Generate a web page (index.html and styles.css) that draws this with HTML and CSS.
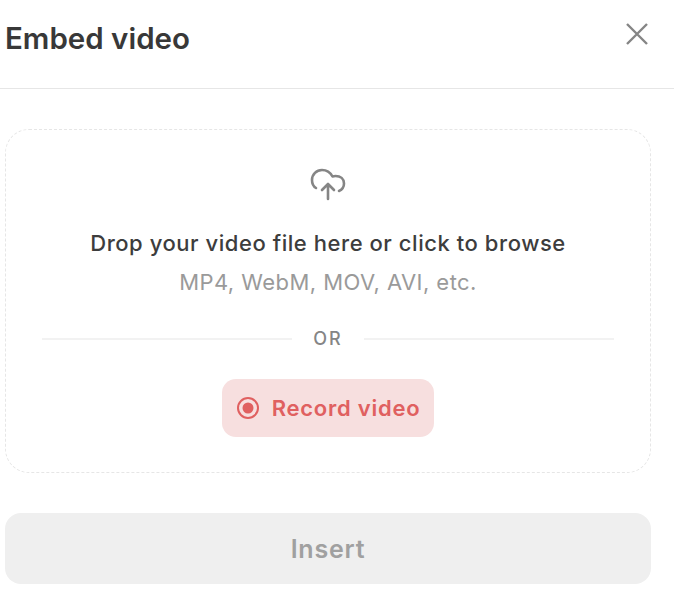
FILE: index.html
```html
<!DOCTYPE html>
<html>
  <head>
    <title>Embed video</title>
    <meta charset="utf-8">
    <link rel="stylesheet" href="styles.css">
  </head>
  <body>
    <div class="dialog">
      <div class="header">
        <h1 class="title">Embed video</h1>
        <svg class="close" width="24" height="24" viewBox="0 0 24 24" fill="none" stroke="#858585" stroke-width="2.4">
          <path d="M2 2L22 22M22 2L2 22"/>
        </svg>
      </div>
      <div class="content">
        <div class="dropzone">
          <svg class="upload" width="36" height="36" viewBox="0 0 36 36" fill="none" stroke="#858585" stroke-width="2.6" stroke-linecap="round" stroke-linejoin="round">
            <path d="M6 22C3.5 20.5 2 17.5 2 14C2 8.5 6.5 4 12 4C16.8 4 20.5 6.8 22.5 10.5C23.5 10.2 24.5 10 25.5 10C30.5 10 34 13 34 17.5C34 20.8 32 23.6 29 25"/>
            <path d="M18 33V18M12 24L18 18L24 24"/>
          </svg>
          <div class="drop-title">Drop your video file here or click to browse</div>
          <div class="drop-hint">MP4, WebM, MOV, AVI, etc.</div>
          <div class="divider">
            <span class="divider-line"></span>
            <span class="divider-text">OR</span>
            <span class="divider-line"></span>
          </div>
          <div class="record-btn">
            <svg width="24" height="24" viewBox="0 0 24 24" fill="none">
              <circle cx="12" cy="12" r="10" stroke="#e06060" stroke-width="2"/>
              <circle cx="12" cy="12" r="5.5" fill="#e06060"/>
            </svg>
            <span>Record video</span>
          </div>
        </div>
        <div class="insert-btn">Insert</div>
      </div>
    </div>
  </body>
</html>
```

FILE: styles.css
```css
html, body {
  margin: 0;
  padding: 0;
  background: #fff;
}

.dialog {
  width: 674px;
  height: 598px;
  font-family: "Inter", "Liberation Sans", sans-serif;
  overflow: hidden;
}

.header {
  height: 89px;
  box-sizing: border-box;
  border-bottom: 1px solid #e6e6e6;
  display: flex;
  justify-content: space-between;
  padding: 21px 25px 0 5px;
}

.title {
  margin: 0;
  font-size: 29.5px;
  line-height: 34px;
  font-weight: 600;
  color: #383838;
}

.close {
  margin-top: 1px;
}

.content {
  padding: 40px 23px 0 5px;
}

.dropzone {
  height: 344px;
  box-sizing: border-box;
  border: 1px dashed #e6e6e6;
  border-radius: 24px;
  padding: 36px 36px 0;
  display: flex;
  flex-direction: column;
  align-items: center;
}

.drop-title {
  margin-top: 26px;
  font-size: 22px;
  line-height: 30px;
  font-weight: 500;
  letter-spacing: 0.55px;
  color: #3d3d3d;
}

.drop-hint {
  margin-top: 9px;
  font-size: 22px;
  line-height: 30px;
  letter-spacing: 0.44px;
  color: #9a9a9a;
}

.divider {
  width: 100%;
  margin-top: 27px;
  display: flex;
  align-items: center;
  gap: 21px;
}

.divider-line {
  flex: 1;
  height: 2px;
  background: #f2f2f2;
}

.divider-text {
  font-size: 18px;
  line-height: 30px;
  font-weight: 500;
  letter-spacing: 2px;
  color: #858585;
}

.record-btn {
  margin-top: 25px;
  height: 58px;
  box-sizing: border-box;
  padding: 0 14px;
  display: flex;
  align-items: center;
  gap: 12px;
  background: #f7dfdf;
  border-radius: 14px;
  font-size: 22px;
  font-weight: 600;
  letter-spacing: 0.75px;
  color: #e06060;
}

.insert-btn {
  margin-top: 40px;
  height: 71px;
  background: #efefef;
  border-radius: 16px;
  display: flex;
  align-items: center;
  justify-content: center;
  font-size: 25px;
  font-weight: 600;
  letter-spacing: 0.8px;
  color: #a0a0a0;
}
```
